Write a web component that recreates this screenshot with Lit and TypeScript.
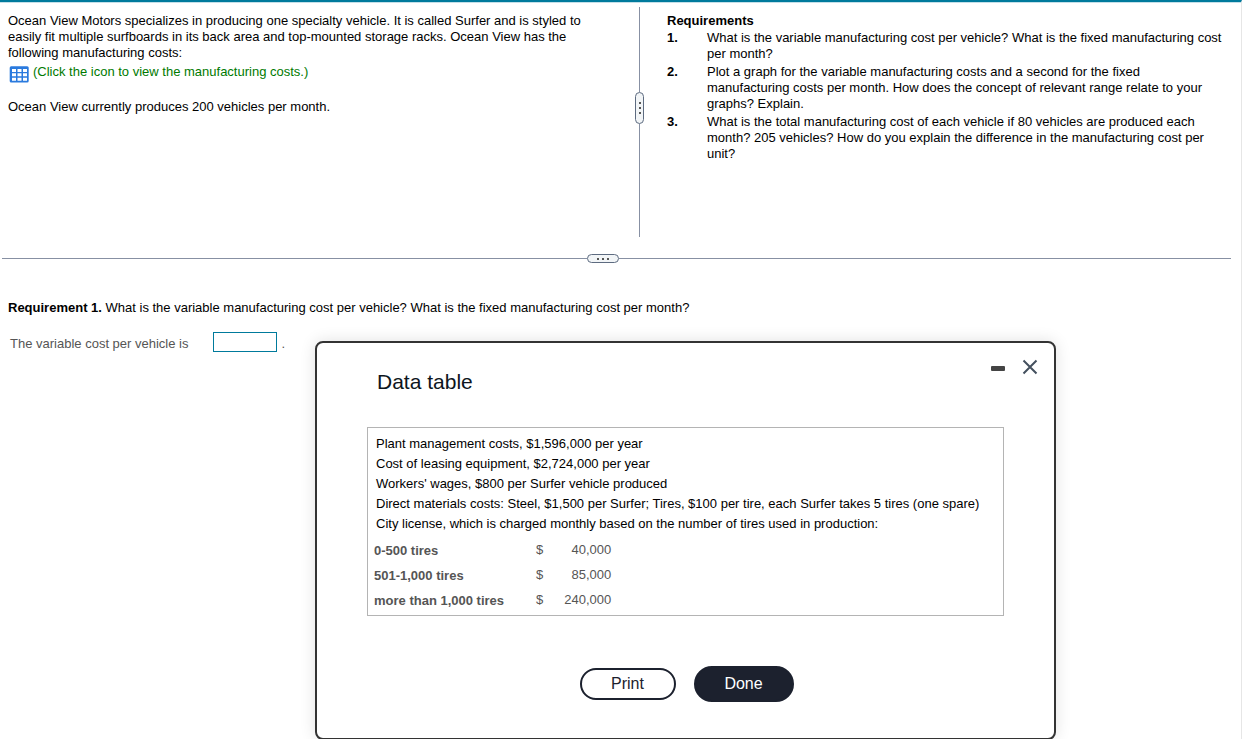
import { LitElement, html, css } from "lit";
import { customElement, property, state } from "lit/decorators.js";

interface LicenseTier {
  range: string;
  fee: string;
}

const REQUIREMENTS = [
  "What is the variable manufacturing cost per vehicle? What is the fixed manufacturing cost per month?",
  "Plot a graph for the variable manufacturing costs and a second for the fixed manufacturing costs per month. How does the concept of relevant range relate to your graphs? Explain.",
  "What is the total manufacturing cost of each vehicle if 80 vehicles are produced each month? 205 vehicles? How do you explain the difference in the manufacturing cost per unit?",
];

const COSTS = [
  "Plant management costs, $1,596,000 per year",
  "Cost of leasing equipment, $2,724,000 per year",
  "Workers' wages, $800 per Surfer vehicle produced",
  "Direct materials costs: Steel, $1,500 per Surfer; Tires, $100 per tire, each Surfer takes 5 tires (one spare)",
  "City license, which is charged monthly based on the number of tires used in production:",
];

const TIERS: LicenseTier[] = [
  { range: "0-500 tires", fee: "40,000" },
  { range: "501-1,000 tires", fee: "85,000" },
  { range: "more than 1,000 tires", fee: "240,000" },
];

@customElement("data-dialog")
export class DataDialog extends LitElement {
  static styles = css`
    :host {
      display: block;
      box-sizing: border-box;
      padding: 16px 50px 36px;
      background: #fff;
      border: 2px solid #333;
      border-radius: 8px;
      box-shadow: 0 0 16px rgba(0, 0, 0, 0.12);
    }
    button {
      font-family: inherit;
      cursor: pointer;
    }
    .header {
      display: flex;
      justify-content: space-between;
      align-items: flex-start;
      margin-bottom: 33px;
    }
    .tools {
      display: flex;
      gap: 16px;
      margin-right: -34px;
    }
    .tool {
      display: block;
      width: 16px;
      height: 16px;
      padding: 0;
      border: 0;
      background: none;
    }
    .tool svg {
      display: block;
    }
    .title {
      margin: 0;
      padding: 11px 0 0 10px;
      font-size: 21px;
      line-height: 24px;
      font-weight: 400;
      color: #0d1520;
    }
    .panel {
      padding: 6px 6px 2px;
      border: 1px solid #b4b4b4;
    }
    .costs {
      margin: 0 0 4px;
      padding: 0 0 0 2px;
      list-style: none;
      line-height: 20px;
      color: #000;
    }
    .fees {
      border-collapse: collapse;
      color: #555;
    }
    .fees th,
    .fees td {
      box-sizing: border-box;
      height: 25px;
      padding: 0;
      font-size: 13px;
      line-height: 16px;
    }
    .fees td {
      padding-bottom: 2px;
    }
    .fees th {
      width: 162px;
      text-align: left;
    }
    .fees .fee {
      width: 68px;
      text-align: right;
    }
    .actions {
      display: flex;
      justify-content: center;
      align-items: center;
      gap: 18px;
      margin-top: 50px;
      padding-left: 2px;
    }
    .action {
      font-size: 16px;
      line-height: 20px;
      border: 2px solid #1c212e;
      border-radius: 18px;
    }
    .print {
      width: 96px;
      padding: 4px 0;
      background: #fff;
      color: #1c212e;
    }
    .done {
      width: 100px;
      padding: 6px 0;
      background: #1c212e;
      color: #fff;
    }
  `;

  @property({ type: String }) heading = "";

  private close() {
    this.dispatchEvent(new CustomEvent("dialog-close"));
  }

  render() {
    return html`
      <div class="header">
        <h2 class="title">${this.heading}</h2>
        <div class="tools">
          <button class="tool" aria-label="Minimize">
            <svg width="16" height="16" viewBox="0 0 16 16">
              <rect x="1" y="7" width="14" height="5" rx="1" fill="#444" />
            </svg>
          </button>
          <button class="tool" aria-label="Close" @click=${this.close}>
            <svg width="16" height="16" viewBox="0 0 16 16">
              <path d="M1.5 1.5L14.5 14.5M14.5 1.5L1.5 14.5" stroke="#44505e" stroke-width="2" fill="none" />
            </svg>
          </button>
        </div>
      </div>
      <div class="panel">
        <ul class="costs">
          ${COSTS.map((c) => html`<li>${c}</li>`)}
        </ul>
        <table class="fees">
          <tbody>
            ${TIERS.map(
              (t) => html`<tr>
                <th scope="row">${t.range}</th>
                <td>$</td>
                <td class="fee">${t.fee}</td>
              </tr>`
            )}
          </tbody>
        </table>
      </div>
      <div class="actions">
        <button class="action print">Print</button>
        <button class="action done" @click=${this.close}>Done</button>
      </div>
    `;
  }
}

@customElement("app-root")
export class AppRoot extends LitElement {
  static styles = css`
    :host {
      display: block;
      position: relative;
      box-sizing: border-box;
      min-height: 100vh;
      overflow: hidden;
      border-top: 2px solid #007a9c;
      border-right: 1px solid #e6e6e6;
      background: #fff;
      font-family: "Liberation Sans", Arial, sans-serif;
      font-size: 13px;
      line-height: 16px;
      color: #000;
    }
    .problem {
      display: grid;
      grid-template-columns: 635fr 9px 597fr;
      min-height: 230px;
      padding-top: 4px;
      border-top: 1px solid #c4dfe8;
    }
    .intro {
      padding: 6px 36px 0 8px;
    }
    .intro p {
      margin: 0;
    }
    .intro .source {
      display: flex;
      align-items: flex-start;
      gap: 4px;
      margin: 3px 0 16px;
      padding-left: 1px;
    }
    .source a {
      color: #007a00;
      text-decoration: none;
    }
    .icon {
      display: block;
      flex: none;
      margin-top: 2px;
    }
    .splitter {
      display: flex;
      flex-direction: column;
      align-items: center;
    }
    .rule {
      width: 1px;
      flex: 1;
      background: #8790a3;
    }
    .rule.upper {
      flex: none;
      height: 85px;
    }
    .grip {
      display: flex;
      flex: none;
      box-sizing: border-box;
      justify-content: center;
      align-items: center;
      gap: 3px;
      padding: 0;
      border: 1px solid #5d6b80;
      border-radius: 5px;
      background: #f2f5f7;
    }
    .grip i {
      width: 2px;
      height: 2px;
      background: #555;
    }
    .grip.tall {
      flex-direction: column;
      width: 9px;
      height: 32px;
      cursor: col-resize;
    }
    .grip.wide {
      width: 32px;
      height: 9px;
      cursor: row-resize;
    }
    .tasks {
      padding: 6px 16px 0 23px;
    }
    .tasks h2 {
      margin: 0 0 1px;
      font-size: 13px;
      line-height: 16px;
    }
    .tasks ol {
      display: grid;
      gap: 2px;
      margin: 0;
      padding: 0;
      list-style: none;
    }
    .tasks li {
      display: grid;
      grid-template-columns: 40px 1fr;
    }
    .divider {
      display: flex;
      align-items: center;
      margin: 17px 10px 0 2px;
    }
    .line {
      height: 1px;
      flex: 612;
      background: #8790a3;
    }
    .line.before {
      flex: 585;
    }
    .question {
      margin: 37px 8px 0;
    }
    .question p {
      margin: 0;
    }
    .question .answer {
      display: flex;
      align-items: flex-end;
      margin-top: 16px;
      padding-left: 2px;
      color: #555;
    }
    .answer input {
      box-sizing: border-box;
      width: 64px;
      height: 20px;
      margin: 0 4px 0 25px;
      padding: 0 4px;
      border: 1px solid #007a9c;
      border-radius: 0;
      font: inherit;
      outline: none;
    }
    .window {
      position: absolute;
      left: 315px;
      top: 339px;
      width: 741px;
    }
  `;

  @state() private open = true;

  private show(e: Event) {
    e.preventDefault();
    this.open = true;
  }

  render() {
    return html`
      <section class="problem">
        <div class="intro">
          <p>
            Ocean View Motors specializes in producing one specialty vehicle. It is called Surfer and is styled to
            easily fit multiple surfboards in its back area and top-mounted storage racks. Ocean View has the following
            manufacturing costs:
          </p>
          <p class="source">
            <svg class="icon" width="20" height="17" viewBox="0 0 20 17" aria-hidden="true">
              <rect x="0.7" y="0.2" width="19" height="16.3" rx="1.5" fill="#2a7ade" />
              <path
                d="M3 3h4v3H3zM8.5 3h4v3h-4zM14 3h4v3h-4zM3 7.3h4v3H3zM8.5 7.3h4v3h-4zM14 7.3h4v3h-4zM3 11.8h4v3H3zM8.5 11.8h4v3h-4zM14 11.8h4v3h-4z"
                fill="#fff"
              />
            </svg>
            <a href="#costs" @click=${this.show}>(Click the icon to view the manufacturing costs.)</a>
          </p>
          <p>Ocean View currently produces 200 vehicles per month.</p>
        </div>
        <div class="splitter">
          <span class="rule upper"></span>
          <button class="grip tall" aria-label="Resize columns"><i></i><i></i><i></i></button>
          <span class="rule"></span>
        </div>
        <div class="tasks">
          <h2>Requirements</h2>
          <ol>
            ${REQUIREMENTS.map((r, i) => html`<li><b>${i + 1}.</b><span>${r}</span></li>`)}
          </ol>
        </div>
      </section>
      <div class="divider">
        <span class="line before"></span>
        <button class="grip wide" aria-label="Resize rows"><i></i><i></i><i></i></button>
        <span class="line"></span>
      </div>
      <section class="question">
        <p>
          <b>Requirement 1.</b> What is the variable manufacturing cost per vehicle? What is the fixed manufacturing
          cost per month?
        </p>
        <p class="answer">
          <label for="cost">The variable cost per vehicle is</label>
          <input id="cost" type="text" />
          <span>.</span>
        </p>
      </section>
      ${this.open
        ? html`<data-dialog
            class="window"
            role="dialog"
            aria-label="Data table"
            heading="Data table"
            @dialog-close=${() => (this.open = false)}
          ></data-dialog>`
        : null}
    `;
  }
}
